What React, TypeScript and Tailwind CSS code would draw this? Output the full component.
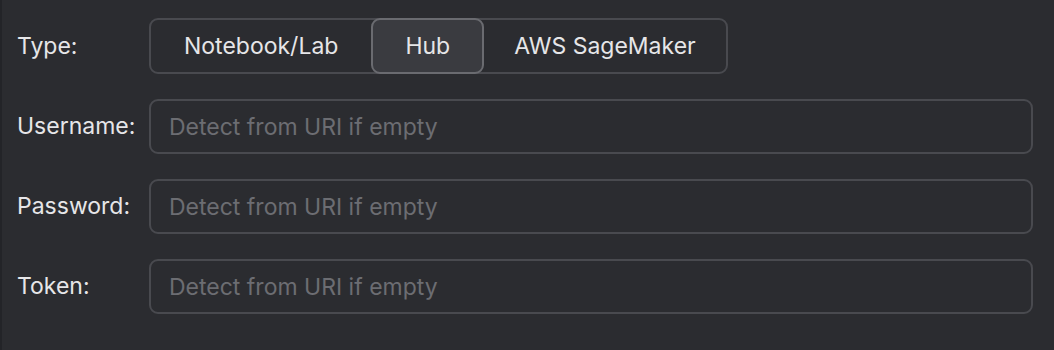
import { useState } from "react";

const types = [
  { name: "Notebook/Lab", pad: "px-[33px]" },
  { name: "Hub", pad: "px-[32px]" },
  { name: "AWS SageMaker", pad: "px-[30px]" },
];

function Field({ label }: { label: string }) {
  return (
    <div className="flex items-center">
      <label className="w-[147px] shrink-0 pl-[15px] text-[23px] text-[#e6e6e8]">{label}</label>
      <input
        type="text"
        placeholder="Detect from URI if empty"
        className="h-[55px] w-[884px] rounded-[9px] border-2 border-[#494a4f] bg-transparent px-[18px] text-[23px] text-[#e6e6e8] outline-none placeholder:text-[#6c6d72]"
      />
    </div>
  );
}

export default function App() {
  const [type, setType] = useState("Hub");

  return (
    <div
      className="flex h-[350px] w-[1054px] flex-col gap-[25px] border-l-2 border-[#232428] bg-[#2b2c30] pt-[18px]"
      style={{ fontFamily: "Inter, 'Noto Sans', sans-serif" }}
    >
      <div className="flex items-center">
        <span className="w-[147px] shrink-0 pl-[15px] text-[23px] text-[#e6e6e8]">Type:</span>
        <div className="flex h-[56px] rounded-[9px] border-2 border-[#494a4f]">
          {types.map((t) =>
            t.name === type ? (
              <button
                key={t.name}
                onClick={() => setType(t.name)}
                className={`-my-[2px] rounded-[9px] border-2 border-[#6a6b70] bg-[#3a3b40] text-[23px] text-[#e6e6e8] ${t.pad}`}
              >
                {t.name}
              </button>
            ) : (
              <button
                key={t.name}
                onClick={() => setType(t.name)}
                className={`text-[23px] text-[#e6e6e8] ${t.pad}`}
              >
                {t.name}
              </button>
            )
          )}
        </div>
      </div>
      <Field label="Username:" />
      <Field label="Password:" />
      <Field label="Token:" />
    </div>
  );
}
